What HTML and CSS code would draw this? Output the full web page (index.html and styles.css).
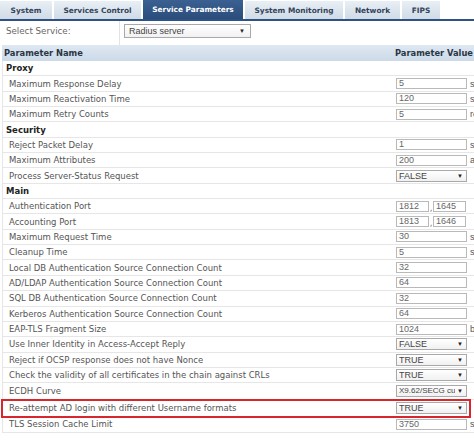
FILE: index.html
```html
<!DOCTYPE html>
<html lang="en">
<head>
<meta charset="UTF-8">
<title>Service Parameters</title>
<link rel="stylesheet" href="styles.css">
</head>
<body>
<div class="page">
    <div class="tabs">
        <div class="tab t-system">System</div>
        <div class="tab t-control">Services Control</div>
        <div class="tab active t-params">Service Parameters</div>
        <div class="tab t-monitor">System Monitoring</div>
        <div class="tab t-network">Network</div>
        <div class="tab t-fips">FIPS</div>
    </div>

    <div class="service-bar">
        <div class="service-label">Select Service:</div>
        <div class="service-pick">
            <div class="select wide"><span>Radius server</span><i>&#9660;</i></div>
        </div>
    </div>

    <div class="params">
        <div class="head">
            <div class="name">Parameter Name</div>
            <div class="value">Parameter Value</div>
        </div>

        <div class="row section"><div class="name">Proxy</div></div>
        <div class="row">
            <div class="name">Maximum Response Delay</div>
            <div class="value"><div class="input">5</div><span class="unit">seconds</span></div>
        </div>
        <div class="row">
            <div class="name">Maximum Reactivation Time</div>
            <div class="value"><div class="input">120</div><span class="unit">seconds</span></div>
        </div>
        <div class="row">
            <div class="name">Maximum Retry Counts</div>
            <div class="value"><div class="input">5</div><span class="unit">retries</span></div>
        </div>

        <div class="row section"><div class="name">Security</div></div>
        <div class="row">
            <div class="name">Reject Packet Delay</div>
            <div class="value"><div class="input">1</div><span class="unit">seconds</span></div>
        </div>
        <div class="row">
            <div class="name">Maximum Attributes</div>
            <div class="value"><div class="input">200</div><span class="unit">attributes</span></div>
        </div>
        <div class="row">
            <div class="name">Process Server-Status Request</div>
            <div class="value"><div class="select"><span>FALSE</span><i>&#9660;</i></div></div>
        </div>

        <div class="row section"><div class="name">Main</div></div>
        <div class="row">
            <div class="name">Authentication Port</div>
            <div class="value"><div class="input port">1812</div><span class="comma">,</span><div class="input port">1645</div></div>
        </div>
        <div class="row">
            <div class="name">Accounting Port</div>
            <div class="value"><div class="input port">1813</div><span class="comma">,</span><div class="input port">1646</div></div>
        </div>
        <div class="row">
            <div class="name">Maximum Request Time</div>
            <div class="value"><div class="input">30</div><span class="unit">seconds</span></div>
        </div>
        <div class="row">
            <div class="name">Cleanup Time</div>
            <div class="value"><div class="input">5</div><span class="unit">seconds</span></div>
        </div>
        <div class="row">
            <div class="name">Local DB Authentication Source Connection Count</div>
            <div class="value"><div class="input">32</div></div>
        </div>
        <div class="row">
            <div class="name">AD/LDAP Authentication Source Connection Count</div>
            <div class="value"><div class="input">64</div></div>
        </div>
        <div class="row">
            <div class="name">SQL DB Authentication Source Connection Count</div>
            <div class="value"><div class="input">32</div></div>
        </div>
        <div class="row">
            <div class="name">Kerberos Authentication Source Connection Count</div>
            <div class="value"><div class="input">64</div></div>
        </div>
        <div class="row">
            <div class="name">EAP-TLS Fragment Size</div>
            <div class="value"><div class="input">1024</div><span class="unit">bytes</span></div>
        </div>
        <div class="row">
            <div class="name">Use Inner Identity in Access-Accept Reply</div>
            <div class="value"><div class="select"><span>FALSE</span><i>&#9660;</i></div></div>
        </div>
        <div class="row">
            <div class="name">Reject if OCSP response does not have Nonce</div>
            <div class="value"><div class="select"><span>TRUE</span><i>&#9660;</i></div></div>
        </div>
        <div class="row">
            <div class="name">Check the validity of all certificates in the chain against CRLs</div>
            <div class="value"><div class="select"><span>TRUE</span><i>&#9660;</i></div></div>
        </div>
        <div class="row tall">
            <div class="name">ECDH Curve</div>
            <div class="value"><div class="select narrow-text"><span>X9.62/SECG cu</span><i>&#9660;</i></div></div>
        </div>
        <div class="row tall marked">
            <div class="name">Re-attempt AD login with different Username formats</div>
            <div class="value"><div class="select"><span>TRUE</span><i>&#9660;</i></div></div>
        </div>
        <div class="row last">
            <div class="name">TLS Session Cache Limit</div>
            <div class="value"><div class="input">3750</div><span class="unit">sessions</span></div>
        </div>
    </div>
</div>
</body>
</html>
```

FILE: styles.css
```css
/* Service parameters page */
body {
    margin: 0;
    background: #fff;
    font-family: "DejaVu Sans", Verdana, sans-serif;
    font-size: 8.5px;
    color: #555;
}
.page {
    width: 474px;
    height: 440px;
    overflow: hidden;
}

/* tabs */
.tabs {
    display: flex;
    gap: 2px;
    height: 19px;
    border-bottom: 2px solid #2e5283;
    width: 520px;
}
.tab {
    margin-top: 1px;
    display: flex;
    align-items: center;
    justify-content: center;
    font-size: 7.4px;
    font-weight: bold;
    color: #34445a;
    background: linear-gradient(#e9eff5, #cfdbe7);
}
.tab.active {
    margin-top: 0;
    color: #fff;
    background: linear-gradient(#3a6192, #2a4c7b);
}
.t-system { width: 52px; }
.t-control { width: 87px; }
.t-params { width: 100px; }
.t-monitor { width: 98px; }
.t-network { width: 55px; }
.t-fips { width: 38px; }

/* service picker */
.service-bar {
    display: flex;
    height: 24px;
}
.service-label {
    width: 113px;
    padding-left: 6px;
    padding-top: 5px;
    border-right: 1px solid #e3e3e3;
    font-size: 8.7px;
    color: #666;
}
.service-pick {
    padding-left: 4px;
    padding-top: 3px;
}

/* inputs */
.input, .select {
    box-sizing: border-box;
    width: 71px;
    height: 11px;
    border: 1px solid #b9b9b9;
    background: #fff;
    font-family: "Liberation Sans", Arial, sans-serif;
    font-size: 9px;
    line-height: 9px;
    padding-left: 2px;
    color: #666;
}
.input.port {
    width: 33px;
}
.select {
    display: flex;
    justify-content: space-between;
    height: 12px;
    line-height: 10px;
    padding-right: 3px;
    border-color: #a9a9a9;
    background: linear-gradient(#fff, #f1f1f1);
    color: #444;
    font-size: 9px;
}
.select span {
    flex: 1;
    min-width: 0;
    overflow: hidden;
    white-space: nowrap;
}
.select i {
    margin-left: 2px;
    font-style: normal;
    font-size: 6px;
    color: #222;
}
.select.narrow-text {
    font-size: 8px;
}
.select.wide {
    width: 127px;
    height: 14px;
    line-height: 12px;
    font-size: 9px;
    padding-left: 4px;
    padding-right: 5px;
}
.unit {
    margin-left: 3px;
    font-family: "Liberation Sans", Arial, sans-serif;
    font-size: 9px;
    color: #555;
}
.comma {
    width: 4px;
    padding-top: 3px;
    text-align: center;
    color: #777;
}

/* table */
.params {
    width: 520px;
    margin-left: 2px;
    border-left: 1px solid #e6e6e6;
}
.head {
    display: flex;
    align-items: center;
    height: 16px;
    margin-left: -1px;
    padding-left: 2px;
    background: linear-gradient(#dfe8f2, #cbd9e8);
    font-size: 8.3px;
    font-weight: bold;
    color: #2a3644;
}
.head .name {
    width: 391px;
}
.row {
    box-sizing: border-box;
    display: flex;
    align-items: center;
    height: 15.35px;
    border-bottom: 1px solid #e6e6e6;
}
.row.tall {
    height: 16.7px;
}
.row.last {
    height: 16px;
}
.row .name {
    width: 387px;
    padding-left: 6px;
    white-space: nowrap;
}
.row.section .name {
    padding-left: 3px;
    font-weight: bold;
    color: #222;
}
.value {
    display: flex;
    align-items: center;
}
.row.marked {
    outline: 2px solid #d8262c;
    outline-offset: -1px;
    width: 468px;
    margin-left: -1px;
    padding-left: 1px;
}
```
